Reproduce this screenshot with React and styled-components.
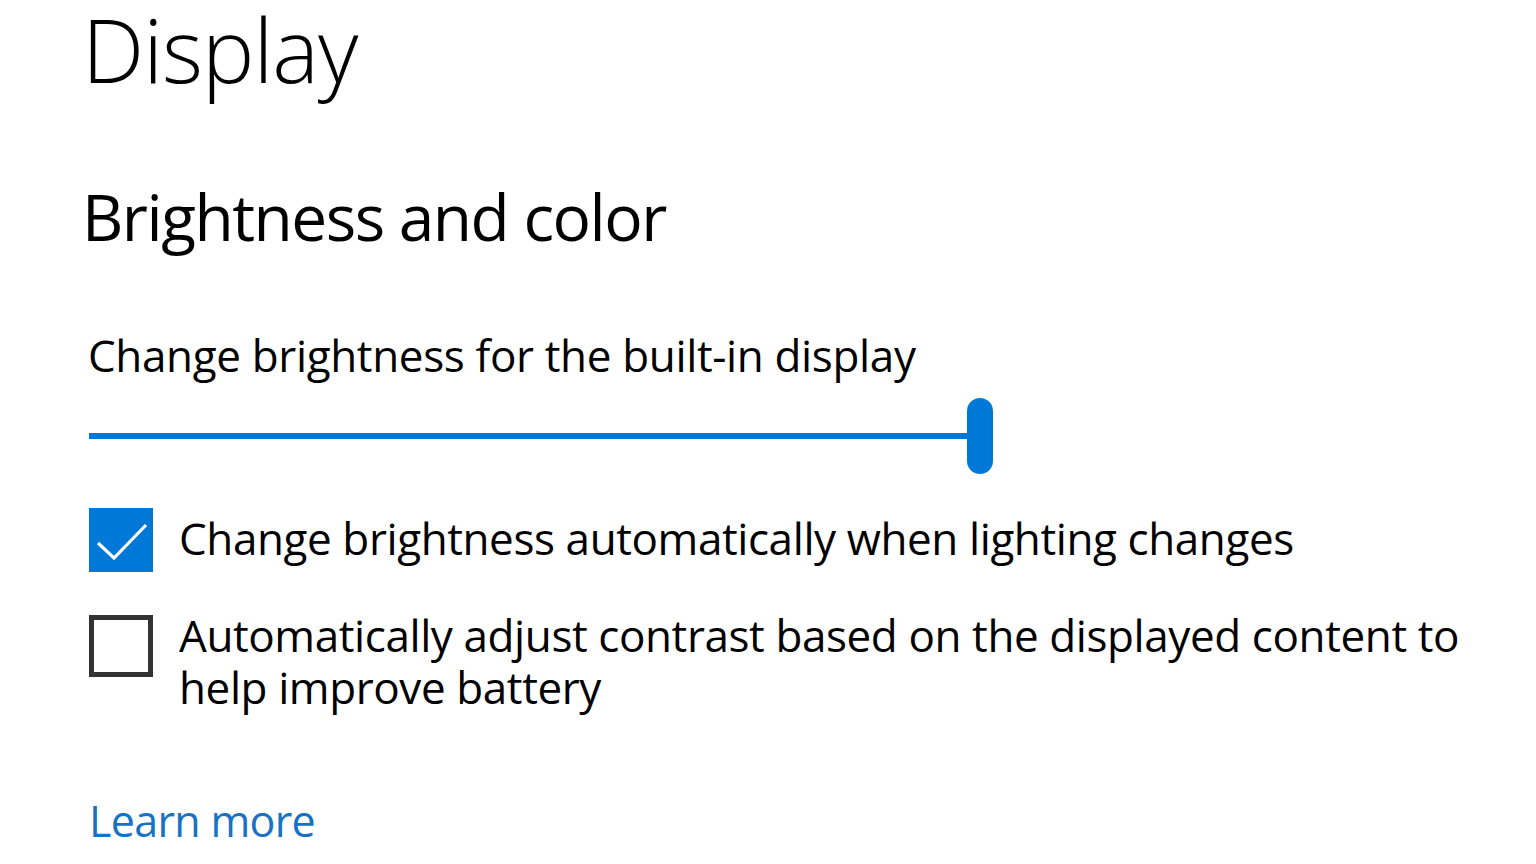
import styled, { createGlobalStyle } from "styled-components";

const GlobalStyle = createGlobalStyle`
  html, body {
    margin: 0;
    padding: 0;
    background: #ffffff;
  }
  body {
    font-family: "Open Sans", "Noto Sans", "Liberation Sans", sans-serif;
    color: #000000;
  }
`;

function App() {
  return (
    <Page>
      <GlobalStyle />
      <Title>Display</Title>
      <Section>Brightness and color</Section>
      <Label>Change brightness for the built-in display</Label>
      <Slider>
        <Track />
        <Thumb />
      </Slider>
      <CheckRow $top={34}>
        <Box $checked>
          <svg width="64" height="64" viewBox="0 0 64 64">
            <path d="M9 35 L25 50 L57 17" fill="none" stroke="#fff" strokeWidth="3.2" />
          </svg>
        </Box>
        <CheckText $offset={4}>Change brightness automatically when lighting changes</CheckText>
      </CheckRow>
      <CheckRow $top={37}>
        <Box $offset={6} />
        <CheckText>
          Automatically adjust contrast based on the displayed content to help improve battery
        </CheckText>
      </CheckRow>
      <Link href="./">Learn more</Link>
    </Page>
  );
}

export default App;

const Page = styled.div`
  width: 1536px;
  height: 864px;
  padding-left: 82px;
  box-sizing: border-box;
  overflow: hidden;
  display: flex;
  flex-direction: column;
  align-items: flex-start;
`;

const Title = styled.h1`
  margin: 0;
  font-size: 88px;
  font-weight: 300;
  line-height: 98px;
  letter-spacing: -1px;
`;

const Section = styled.h2`
  margin: 79px 0 0 0;
  font-size: 64px;
  font-weight: 400;
  line-height: 80px;
  letter-spacing: -1.5px;
`;

const Label = styled.div`
  margin: 71px 0 0 6px;
  font-size: 44px;
  line-height: 54px;
  letter-spacing: -0.35px;
`;

const Slider = styled.div`
  width: 904px;
  height: 76px;
  margin: 16px 0 0 7px;
  display: flex;
  align-items: center;
`;

const Track = styled.div`
  width: 878px;
  height: 6px;
  background: #0078d7;
`;

const Thumb = styled.div`
  width: 26px;
  height: 76px;
  border-radius: 13px;
  background: #0078d7;
`;

const CheckRow = styled.div`
  display: flex;
  align-items: flex-start;
  gap: 26px;
  margin: ${(p) => p.$top}px 0 0 7px;
`;

const Box = styled.div`
  flex: none;
  width: 64px;
  height: ${(p) => (p.$checked ? 64 : 62)}px;
  box-sizing: border-box;
  margin-top: ${(p) => p.$offset || 0}px;
  background: ${(p) => (p.$checked ? "#0078d7" : "#ffffff")};
  border: ${(p) => (p.$checked ? "none" : "5px solid #333333")};
  display: flex;
`;

const CheckText = styled.div`
  margin-top: ${(p) => p.$offset || 0}px;
  font-size: 44px;
  line-height: 52px;
  letter-spacing: -0.4px;
  max-width: 1300px;
`;

const Link = styled.a`
  margin: 82px 0 0 7px;
  font-size: 43px;
  line-height: 52px;
  color: #1872c4;
  text-decoration: none;
  letter-spacing: -0.7px;
`;
